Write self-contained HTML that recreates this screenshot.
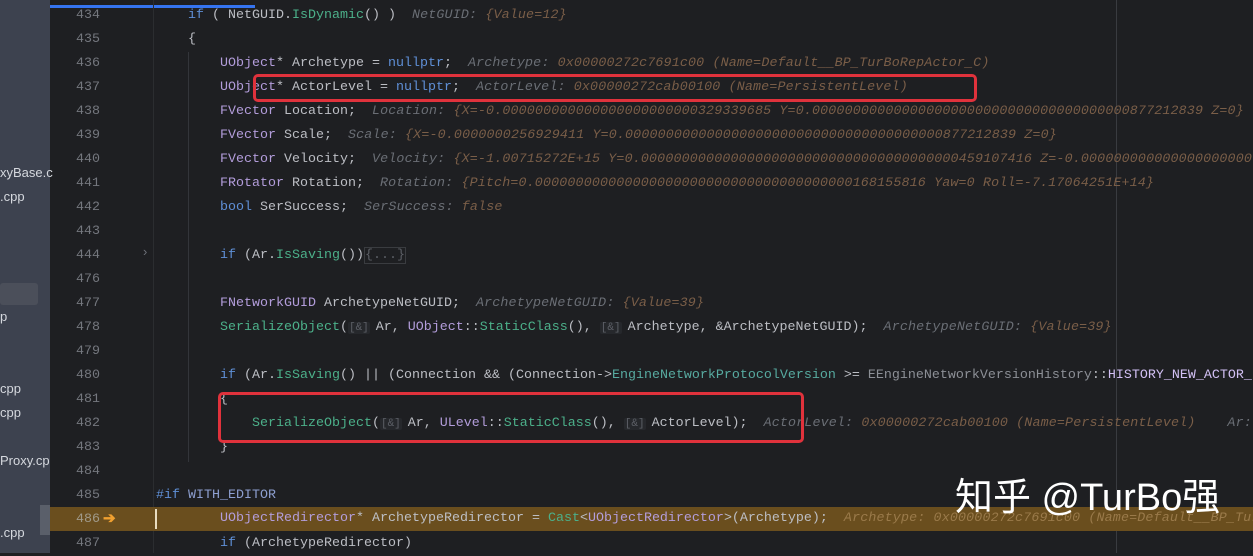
<!DOCTYPE html>
<html><head><meta charset="utf-8"><style>
body{margin:0;width:1253px;height:553px;overflow:hidden;background:#1e1f22;position:relative;font-family:"Liberation Mono",monospace}
#side{position:absolute;left:0;top:0;width:50px;height:553px;background:#3d424f}
.st{position:absolute;font:13px "Liberation Sans",sans-serif;color:#d5d8de;white-space:nowrap}
.ln{position:absolute;left:60px;width:40px;text-align:right;font-size:13.33px;color:#74777e;height:24px;line-height:24px}
.cl{position:absolute;left:156px;font-size:13.33px;color:#bcbec4;white-space:pre;height:24px;line-height:24px}
.k{color:#5f8fd6}.t{color:#b39ddb}.f{color:#4cb08a}.h{color:#6a6e75;font-style:italic;letter-spacing:0.15px}.v{color:#7a5e48;font-style:italic;letter-spacing:0.15px}
.c{color:#57aaa0}.p{color:#5c5f66;background:#26282c;border-radius:2px;font-size:11px;margin-right:6px;padding:0 1px}.m{color:#8c8f96}.w{color:#d3c1f5}
.box{position:absolute;border:3px solid #e0323c;border-radius:5px}
</style></head><body>
<div id="side"></div>
<div style="position:absolute;left:40px;top:505px;width:10px;height:30px;background:#5a5f6a"></div>
<div style="position:absolute;left:0;top:283px;width:38px;height:22px;background:#4b4f5a;border-radius:3px"></div>
<div class="st" style="left:0;top:165px">xyBase.c</div>
<div class="st" style="left:0;top:189px">.cpp</div>
<div class="st" style="left:0;top:309px">p</div>
<div class="st" style="left:0;top:381px">cpp</div>
<div class="st" style="left:0;top:405px">cpp</div>
<div class="st" style="left:0;top:453px">Proxy.cp</div>
<div class="st" style="left:0;top:525px">.cpp</div>
<div style="position:absolute;left:50px;top:5px;width:205px;height:3px;background:#3574f0"></div>
<div style="position:absolute;left:153px;top:0;width:1px;height:553px;background:#2b2d30"></div>
<div style="position:absolute;left:1116px;top:0;width:1px;height:553px;background:#393b40"></div>
<div style="position:absolute;left:188px;top:52px;width:1px;height:410px;background:#33353a"></div>
<div style="position:absolute;left:50px;top:507px;width:1203px;height:24px;background:#6a4e1e"></div>
<div style="position:absolute;left:155px;top:509px;width:2px;height:20px;background:#e8dcc0"></div>
<div style="position:absolute;left:103px;top:507px;font:bold 15px 'Liberation Sans';color:#f0a030;line-height:24px">➔</div>

<div class="ln" style="top:4px">434</div><div class="cl" style="top:4px">    <span class="k">if</span> ( NetGUID.<span class="f">IsDynamic</span>() )  <span class="h">NetGUID: </span><span class="v">{Value=12}</span></div>
<div class="ln" style="top:28px">435</div><div class="cl" style="top:28px">    {</div>
<div class="ln" style="top:52px">436</div><div class="cl" style="top:52px">        <span class="t">UObject</span>* Archetype = <span class="k">nullptr</span>;  <span class="h">Archetype: </span><span class="v">0x00000272c7691c00 (Name=Default__BP_TurBoRepActor_C)</span></div>
<div class="ln" style="top:76px">437</div><div class="cl" style="top:76px">        <span class="t">UObject</span>* ActorLevel = <span class="k">nullptr</span>;  <span class="h">ActorLevel: </span><span class="v">0x00000272cab00100 (Name=PersistentLevel)</span></div>
<div class="ln" style="top:100px">438</div><div class="cl" style="top:100px">        <span class="t">FVector</span> Location;  <span class="h">Location: </span><span class="v">{X=-0.000000000000000000000000329339685 Y=0.000000000000000000000000000000000000000877212839 Z=0}</span></div>
<div class="ln" style="top:124px">439</div><div class="cl" style="top:124px">        <span class="t">FVector</span> Scale;  <span class="h">Scale: </span><span class="v">{X=-0.0000000256929411 Y=0.000000000000000000000000000000000000000877212839 Z=0}</span></div>
<div class="ln" style="top:148px">440</div><div class="cl" style="top:148px">        <span class="t">FVector</span> Velocity;  <span class="h">Velocity: </span><span class="v">{X=-1.00715272E+15 Y=0.000000000000000000000000000000000000000459107416 Z=-0.000000000000000000000</span></div>
<div class="ln" style="top:172px">441</div><div class="cl" style="top:172px">        <span class="t">FRotator</span> Rotation;  <span class="h">Rotation: </span><span class="v">{Pitch=0.000000000000000000000000000000000000000168155816 Yaw=0 Roll=-7.17064251E+14}</span></div>
<div class="ln" style="top:196px">442</div><div class="cl" style="top:196px">        <span class="k">bool</span> SerSuccess;  <span class="h">SerSuccess: </span><span class="v">false</span></div>
<div class="ln" style="top:220px">443</div>
<div class="ln" style="top:244px">444</div><div style="position:absolute;left:143px;top:244px;line-height:24px;color:#6d7078;font:13px 'Liberation Sans'">›</div><div class="cl" style="top:244px">        <span class="k">if</span> (Ar.<span class="f">IsSaving</span>())<span style="color:#5c5f66;border:1px solid #3a3c40">{...}</span></div>
<div class="ln" style="top:268px">476</div>
<div class="ln" style="top:292px">477</div><div class="cl" style="top:292px">        <span class="t">FNetworkGUID</span> ArchetypeNetGUID;  <span class="h">ArchetypeNetGUID: </span><span class="v">{Value=39}</span></div>
<div class="ln" style="top:316px">478</div><div class="cl" style="top:316px">        <span class="f">SerializeObject</span>(<span class="p">[&amp;]</span>Ar, <span class="t">UObject</span>::<span class="f">StaticClass</span>(), <span class="p">[&amp;]</span>Archetype, &amp;ArchetypeNetGUID);  <span class="h">ArchetypeNetGUID: </span><span class="v">{Value=39}</span></div>
<div class="ln" style="top:340px">479</div>
<div class="ln" style="top:364px">480</div><div class="cl" style="top:364px">        <span class="k">if</span> (Ar.<span class="f">IsSaving</span>() || (Connection &amp;&amp; (Connection-&gt;<span class="c">EngineNetworkProtocolVersion</span> &gt;= <span class="m">EEngineNetworkVersionHistory</span>::<span class="w">HISTORY_NEW_ACTOR_</span></div>
<div class="ln" style="top:388px">481</div><div class="cl" style="top:388px">        {</div>
<div class="ln" style="top:412px">482</div><div class="cl" style="top:412px">            <span class="f">SerializeObject</span>(<span class="p">[&amp;]</span>Ar, <span class="t">ULevel</span>::<span class="f">StaticClass</span>(), <span class="p">[&amp;]</span>ActorLevel);  <span class="h">ActorLevel: </span><span class="v">0x00000272cab00100 (Name=PersistentLevel)</span>    <span class="h">Ar: {</span></div>
<div class="ln" style="top:436px">483</div><div class="cl" style="top:436px">        }</div>
<div class="ln" style="top:460px">484</div>
<div class="ln" style="top:484px">485</div><div class="cl" style="top:484px"><span class="k">#if</span> <span style="color:#8d9fd0">WITH_EDITOR</span></div>
<div class="ln" style="top:508px;color:#a09a8a">486</div><div class="cl" style="top:507px">        <span class="t">UObjectRedirector</span>* ArchetypeRedirector = <span class="f">Cast</span>&lt;<span class="t">UObjectRedirector</span>&gt;(Archetype);  <span class="v" style="color:#9a7a4a">Archetype: 0x00000272c7691c00 (Name=Default__BP_Tur</span></div>
<div class="ln" style="top:532px">487</div><div class="cl" style="top:532px">        <span class="k">if</span> (ArchetypeRedirector)</div>

<div class="box" style="left:253px;top:74px;width:718px;height:22px"></div>
<div class="box" style="left:218px;top:392px;width:580px;height:45px"></div>
<div style="position:absolute;left:955px;top:475px;font:38px 'Liberation Sans','Noto Sans CJK SC',sans-serif;color:#fff;white-space:nowrap;line-height:46px">知乎 @TurBo强</div>
</body></html>
